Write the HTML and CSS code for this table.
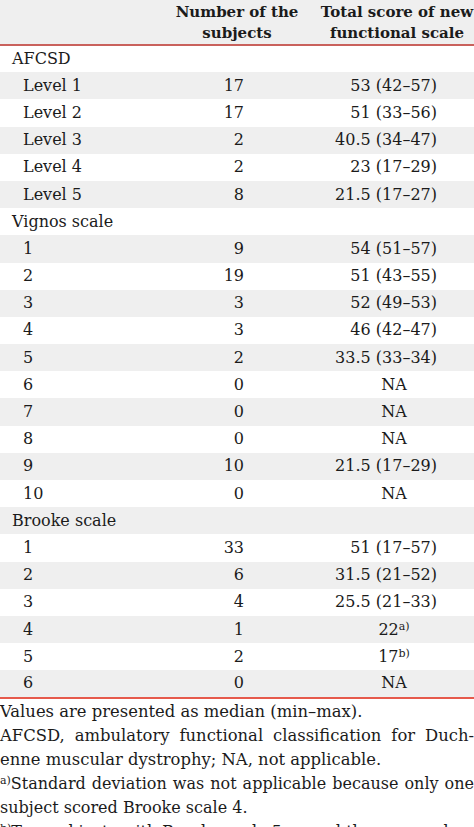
FILE: index.html
```html
<!DOCTYPE html>
<html>
<head>
<meta charset="utf-8">
<link rel="stylesheet" href="styles.css">
</head>
<body>
<table class="data">
  <colgroup><col class="c1"><col class="c2"><col class="c3"></colgroup>
  <thead>
    <tr>
      <th class="h-label"></th>
      <th class="h-num">Number of the<br>subjects</th>
      <th class="h-score">Total score of new<br>functional scale</th>
    </tr>
  </thead>
  <tbody>
    <tr><td class="cat">AFCSD</td><td></td><td></td></tr>
    <tr><td class="sub">Level 1</td><td class="num">17</td><td class="val">53 (42–57)</td></tr>
    <tr><td class="sub">Level 2</td><td class="num">17</td><td class="val">51 (33–56)</td></tr>
    <tr><td class="sub">Level 3</td><td class="num">2</td><td class="val">40.5 (34–47)</td></tr>
    <tr><td class="sub">Level 4</td><td class="num">2</td><td class="val">23 (17–29)</td></tr>
    <tr><td class="sub">Level 5</td><td class="num">8</td><td class="val">21.5 (17–27)</td></tr>
    <tr><td class="cat">Vignos scale</td><td></td><td></td></tr>
    <tr><td class="sub">1</td><td class="num">9</td><td class="val">54 (51–57)</td></tr>
    <tr><td class="sub">2</td><td class="num">19</td><td class="val">51 (43–55)</td></tr>
    <tr><td class="sub">3</td><td class="num">3</td><td class="val">52 (49–53)</td></tr>
    <tr><td class="sub">4</td><td class="num">3</td><td class="val">46 (42–47)</td></tr>
    <tr><td class="sub">5</td><td class="num">2</td><td class="val">33.5 (33–34)</td></tr>
    <tr><td class="sub">6</td><td class="num">0</td><td class="mid">NA</td></tr>
    <tr><td class="sub">7</td><td class="num">0</td><td class="mid">NA</td></tr>
    <tr><td class="sub">8</td><td class="num">0</td><td class="mid">NA</td></tr>
    <tr><td class="sub">9</td><td class="num">10</td><td class="val">21.5 (17–29)</td></tr>
    <tr><td class="sub">10</td><td class="num">0</td><td class="mid">NA</td></tr>
    <tr><td class="cat">Brooke scale</td><td></td><td></td></tr>
    <tr><td class="sub">1</td><td class="num">33</td><td class="val">51 (17–57)</td></tr>
    <tr><td class="sub">2</td><td class="num">6</td><td class="val">31.5 (21–52)</td></tr>
    <tr><td class="sub">3</td><td class="num">4</td><td class="val">25.5 (21–33)</td></tr>
    <tr><td class="sub">4</td><td class="num">1</td><td class="mid">22<sup>a)</sup></td></tr>
    <tr><td class="sub">5</td><td class="num">2</td><td class="mid">17<sup>b)</sup></td></tr>
    <tr><td class="sub">6</td><td class="num">0</td><td class="mid">NA</td></tr>
  </tbody>
</table>
<div class="notes">
  <p>Values are presented as median (min–max).</p>
  <p>AFCSD, ambulatory functional classification for Duch&shy;enne muscular dystrophy; NA, not applicable.</p>
  <p class="fn"><sup>a)</sup>Standard deviation was not applicable because only one subject scored Brooke scale 4.</p>
  <p class="fn"><sup>b)</sup>Two subjects with Brooke scale 5 scored the same value.</p>
</div>
</body>
</html>
```
FILE: styles.css
```css
html, body {
  margin: 0;
  padding: 0;
  background: #ffffff;
}
body {
  font-family: "DejaVu Serif", "Liberation Serif", serif;
  font-size: 16px;
  color: #1b1b1b;
  width: 474px;
  overflow: hidden;
}
.data {
  width: 474px;
  border-collapse: collapse;
  table-layout: fixed;
}
.c1 { width: 170px; }
.c2 { width: 134px; }
.c3 { width: 170px; }
.data thead tr {
  background: #efefef;
  border-bottom: 2px solid #c9615c;
}
.data th {
  font-weight: bold;
  font-size: 15px;
  line-height: 21px;
  padding: 2px 0 0 0;
  height: 41px;
  vertical-align: middle;
  white-space: nowrap;
}
.h-num { text-align: center; }
.h-score { text-align: center; padding-left: 16px !important; }
.data tbody tr { height: 27.2px; }
.data tbody tr:nth-child(even) { background: #efefef; }
.data tbody tr:last-child { border-bottom: 2px solid #e65a4c; }
.data td {
  padding: 0;
  line-height: 20px;
  white-space: nowrap;
  vertical-align: middle;
}
.cat { padding-left: 12px !important; }
.sub { padding-left: 23px !important; }
.num { text-align: right; padding-right: 60px !important; }
.val { text-align: right; padding-right: 37px !important; }
.mid { text-align: center; padding-left: 10px !important; }
sup {
  font-size: 11px;
  line-height: 0;
  vertical-align: 5px;
}
.notes p {
  margin: 0;
  font-size: 16.4px;
  line-height: 24px;
  text-align: justify;
  hyphens: manual;
}
.notes p.fn { font-size: 16px; }
.notes p:first-child { margin-top: 1px; }
```
